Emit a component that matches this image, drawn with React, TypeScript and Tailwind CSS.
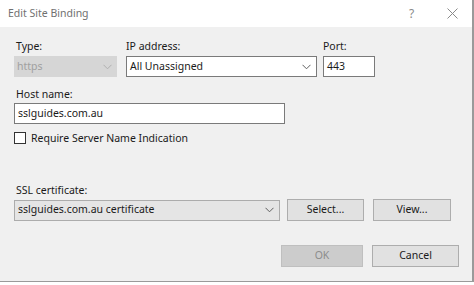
import React from 'react'

const font = { fontFamily: '"Noto Sans", "Open Sans", Arial, sans-serif' }

function Chevron({ color = '#606060' }: { color?: string }) {
  return (
    <svg width="9" height="6" viewBox="0 0 9 6" fill="none">
      <path d="M0.5 0.8 L4.5 4.8 L8.5 0.8" stroke={color} strokeWidth="1" />
    </svg>
  )
}

function Button({ label, disabled, className }: { label: string; disabled?: boolean; className: string }) {
  return disabled
    ? <div className={`flex items-center justify-center h-[22px] bg-[#cccccc] border border-[#bfbfbf] text-[#8d8d8d] ${className}`}>{label}</div>
    : <div className={`flex items-center justify-center h-[22px] bg-[#e1e1e1] border border-[#adadad] text-[#1a1a1a] ${className}`}>{label}</div>
}

export default function App() {
  return (
    <div className="w-[474px] h-[285px] bg-white overflow-hidden text-[10.5px] text-[#1a1a1a]" style={font}>
      <div className="w-[474px] h-[282px] flex flex-col border-r-2 border-b border-[#9a9a9a]">
        {/* title bar */}
        <div className="h-[27px] bg-white flex items-center pl-[8px] shrink-0">
          <span className="text-[10.5px] text-[#707070]">Edit Site Binding</span>
          <span className="ml-auto text-[12px] text-[#8a8a8a] w-[10px]">?</span>
          <svg className="ml-[28px] mr-[14px]" width="11" height="11" viewBox="0 0 11 11">
            <path d="M0.5 0.5 L10.5 10.5 M10.5 0.5 L0.5 10.5" stroke="#8a8a8a" strokeWidth="1" />
          </svg>
        </div>

        {/* body */}
        <div className="flex-1 bg-[#f0f0f0] pl-[14px] pt-[11px]">
          <div className="flex items-start">
            <div className="w-[103px]">
              <div className="leading-4 pl-[2px] h-[18px]">Type:</div>
              <div className="h-[21px] bg-[#d6d6d6] flex items-center px-[3px] text-[#a0a0a0]">
                <span>https</span>
                <span className="ml-auto mr-[2px]"><Chevron color="#b0b0b0" /></span>
              </div>
            </div>
            <div className="w-[191px] ml-[9px]">
              <div className="leading-4 h-[18px]">IP address:</div>
              <div className="h-[21px] bg-white border border-[#7a7a7a] flex items-center px-[3px]">
                <span>All Unassigned</span>
                <span className="ml-auto mr-[2px]"><Chevron /></span>
              </div>
            </div>
            <div className="w-[52px] ml-[6px]">
              <div className="leading-4 h-[18px]">Port:</div>
              <div className="h-[21px] bg-white border border-[#7a7a7a] flex items-center px-[3px]">443</div>
            </div>
          </div>

          <div className="mt-[9px] leading-4 pl-[2px] h-[17px]">Host name:</div>
          <div className="w-[271px] h-[21px] bg-white border border-[#7a7a7a] flex items-center px-[3px]">sslguides.com.au</div>

          <div className="mt-[6px] flex items-center">
            <div className="w-[12px] h-[12px] bg-white border border-[#333333]" />
            <span className="ml-[5px] leading-4">Require Server Name Indication</span>
          </div>

          <div className="mt-[36px] leading-4 pl-[2px] h-[17px]">SSL certificate:</div>
          <div className="flex items-center">
            <div className="w-[266px] h-[21px] bg-[#e5e5e5] border border-[#acacac] flex items-center px-[3px]">
              <span>sslguides.com.au certificate</span>
              <span className="ml-auto mr-[2px]"><Chevron /></span>
            </div>
            <Button label="Select..." className="ml-[7px] w-[77px]" />
            <Button label="View..." className="ml-[9px] w-[78px]" />
          </div>

          <div className="mt-[24px] flex">
            <Button label="OK" disabled className="ml-[267px] w-[82px]" />
            <Button label="Cancel" className="ml-[9px] w-[87px]" />
          </div>
        </div>
      </div>
    </div>
  )
}
